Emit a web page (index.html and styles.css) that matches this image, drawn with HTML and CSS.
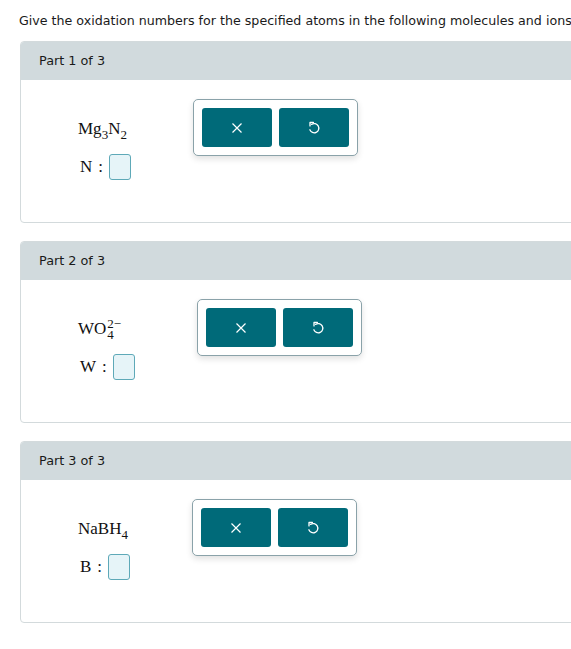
FILE: index.html
```html
<!DOCTYPE html>
<html>
<head>
<meta charset="utf-8">
<link rel="stylesheet" href="styles.css">
</head>
<body>
<p class="intro">Give the oxidation numbers for the specified atoms in the following molecules and ions</p>

<section class="card">
  <div class="card-head">Part 1 of 3</div>
  <div class="card-body">
    <div class="work">
      <div class="formula">Mg<sub>3</sub>N<sub>2</sub></div>
      <div class="answer"><span class="atom">N</span><span class="colon">:</span><span class="box"></span></div>
    </div>
    <div class="tools">
      <button class="btn" type="button"><svg viewBox="0 0 12 12" width="12" height="12"><path d="M1.5 1.5 L10.5 10.5 M10.5 1.5 L1.5 10.5" stroke="#fff" stroke-width="1.2" fill="none"/></svg></button>
      <button class="btn" type="button"><svg viewBox="0 0 14 15" width="14" height="15"><path d="M4.56 4.43 A4.6 4.6 0 1 1 2.88 9.77" stroke="#fff" stroke-width="1.3" fill="none" stroke-linecap="round"/><path d="M6.4 2.5 H3 V5.9" stroke="#fff" stroke-width="1.3" fill="none" stroke-linecap="round" stroke-linejoin="round"/></svg></button>
    </div>
  </div>
</section>

<section class="card">
  <div class="card-head">Part 2 of 3</div>
  <div class="card-body">
    <div class="work">
      <div class="formula">WO<span class="ion"><span class="ion-sup">2&minus;</span><span class="ion-sub">4</span></span></div>
      <div class="answer"><span class="atom">W</span><span class="colon">:</span><span class="box"></span></div>
    </div>
    <div class="tools">
      <button class="btn" type="button"><svg viewBox="0 0 12 12" width="12" height="12"><path d="M1.5 1.5 L10.5 10.5 M10.5 1.5 L1.5 10.5" stroke="#fff" stroke-width="1.2" fill="none"/></svg></button>
      <button class="btn" type="button"><svg viewBox="0 0 14 15" width="14" height="15"><path d="M4.56 4.43 A4.6 4.6 0 1 1 2.88 9.77" stroke="#fff" stroke-width="1.3" fill="none" stroke-linecap="round"/><path d="M6.4 2.5 H3 V5.9" stroke="#fff" stroke-width="1.3" fill="none" stroke-linecap="round" stroke-linejoin="round"/></svg></button>
    </div>
  </div>
</section>

<section class="card">
  <div class="card-head">Part 3 of 3</div>
  <div class="card-body">
    <div class="work">
      <div class="formula">NaBH<sub>4</sub></div>
      <div class="answer"><span class="atom">B</span><span class="colon">:</span><span class="box"></span></div>
    </div>
    <div class="tools">
      <button class="btn" type="button"><svg viewBox="0 0 12 12" width="12" height="12"><path d="M1.5 1.5 L10.5 10.5 M10.5 1.5 L1.5 10.5" stroke="#fff" stroke-width="1.2" fill="none"/></svg></button>
      <button class="btn" type="button"><svg viewBox="0 0 14 15" width="14" height="15"><path d="M4.56 4.43 A4.6 4.6 0 1 1 2.88 9.77" stroke="#fff" stroke-width="1.3" fill="none" stroke-linecap="round"/><path d="M6.4 2.5 H3 V5.9" stroke="#fff" stroke-width="1.3" fill="none" stroke-linecap="round" stroke-linejoin="round"/></svg></button>
    </div>
  </div>
</section>
</body>
</html>
```

FILE: styles.css
```css
html, body {
  margin: 0;
  padding: 0;
  background: #fff;
  overflow: hidden;
}
body {
  width: 571px;
  font-family: "DejaVu Sans", sans-serif;
  color: #1a1a1a;
}
.intro {
  margin: 0;
  padding: 13px 0 0 19px;
  font-size: 12.65px;
  line-height: 16px;
  white-space: nowrap;
  height: 41px;
  box-sizing: border-box;
  overflow: hidden;
}
.card {
  margin: 0 0 19px 20px;
  width: 600px;
  height: 182px;
  box-sizing: border-box;
  border: 1px solid #d3dadc;
  border-radius: 4px;
  overflow: hidden;
}
.card + .card {
  margin-top: -1px;
}
.card-head {
  height: 38px;
  background: #d1dadd;
  padding-left: 18px;
  font-size: 12.8px;
  line-height: 38px;
  color: #1a1a1a;
}
.card-body {
  display: flex;
  align-items: flex-start;
  padding: 19px 0 0 57px;
}
.work {
  padding-top: 19px;
  font-family: "Liberation Serif", serif;
  font-size: 17px;
  color: #111;
}
.formula {
  line-height: 22px;
  height: 24px;
  white-space: nowrap;
}
.formula sub {
  font-size: 13px;
  vertical-align: -5px;
  line-height: 0;
}
.ion {
  display: inline-block;
  vertical-align: -5px;
  font-size: 13px;
  line-height: 11px;
  margin-left: 1px;
}
.ion-sup, .ion-sub {
  display: block;
}
.answer {
  display: flex;
  align-items: center;
  gap: 6px;
  margin-top: 12px;
  padding-left: 2px;
}
.box {
  display: block;
  width: 20px;
  height: 24px;
  background: #e6f4f8;
  border: 1px solid #5ea9b8;
  border-radius: 3px;
}
.tools {
  display: flex;
  gap: 7px;
  margin-left: 62px;
  padding: 8px;
  border: 1px solid #8aa2a9;
  border-radius: 5px;
  background: #fff;
  box-shadow: 0 3px 6px rgba(0, 0, 0, 0.12);
}
.btn {
  width: 70px;
  height: 39px;
  border: 0;
  border-radius: 3px;
  background: #006a79;
  padding: 0;
  display: flex;
  align-items: center;
  justify-content: center;
}
.btn svg {
  display: block;
}
```
